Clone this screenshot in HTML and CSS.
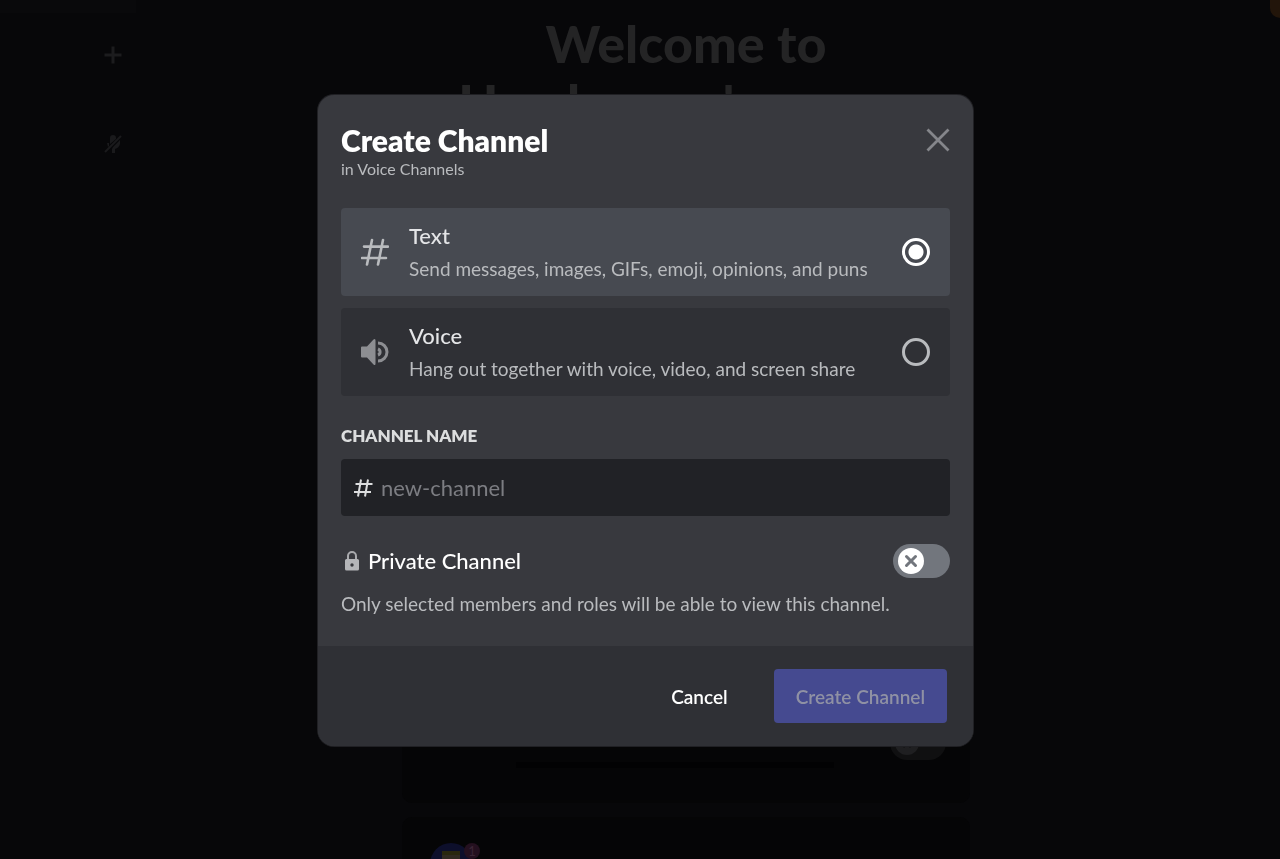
FILE: index.html
```html
<!DOCTYPE html>
<html lang="en">
<head>
<meta charset="UTF-8" />
<meta name="viewport" content="width=device-width, initial-scale=1" />
<title>Create Channel</title>
<link rel="stylesheet" href="styles.css">
</head>
<body>

<div class="app" inert>
  <aside class="sidebar">
    <div class="server-header"></div>
    <button type="button" class="side-button" aria-label="Add channel">
      <svg width="18" height="18" viewBox="0 0 18 18"><path d="M9 0.5v17M0.5 9h17" stroke="#1c1c1e" stroke-width="3" /></svg>
    </button>
    <button type="button" class="side-button" aria-label="Unmute">
      <svg width="18" height="20" viewBox="0 0 18 20">
        <path d="M6 10V4a3 3 0 0 1 6 0v1zM9 13l7-7v4a7 7 0 0 1-5 5v4H8v-4zM3 9h2v3l-1 1z" fill="#1a1a1c" />
        <path d="M1 18L17 2" stroke="#1a1a1c" stroke-width="2" />
      </svg>
    </button>
  </aside>
  <main class="content">
    <h1 class="welcome">Welcome to<br />Harshawnn's server</h1>
    <section class="card card-tall">
      <span class="bar"></span>
      <span class="card-toggle"><svg width="24" height="24" viewBox="0 0 24 24"><circle cx="12" cy="12" r="12" fill="#1f1f21" /><path d="M8 8l8 8M16 8l-8 8" stroke="#131315" stroke-width="3" /></svg></span>
    </section>
    <section class="card">
      <svg class="avatar" width="52" height="44" viewBox="0 0 52 44">
        <circle cx="21" cy="21" r="21" fill="#0d0f2b" />
        <path d="M12 8h18v36H12z" fill="#302a20" />
        <path d="M12 8h18v4H12z" fill="#29270e" />
        <circle cx="42" cy="8" r="8" fill="#24101f" />
        <text x="42" y="13" class="badge">1</text>
      </svg>
    </section>
  </main>
  <aside class="members"><span class="orb"></span></aside>
</div>

<div class="overlay">
  <form class="modal" role="dialog" aria-labelledby="title">
    <div class="modal-body">
      <header class="modal-header">
        <div>
          <h2 class="title" id="title">Create Channel</h2>
          <p class="subtitle">in Voice Channels</p>
        </div>
        <button type="button" class="close" aria-label="Close">
          <svg width="24" height="24" viewBox="0 0 24 24"><path d="M1.5 1.5l21 21M22.5 1.5l-21 21" stroke="#85868b" stroke-width="2.8" /></svg>
        </button>
      </header>

      <div class="types">
        <label class="type">
          <svg width="28" height="28" viewBox="0 0 28 28"><path d="M11 2L6 26.5M22 2L17 26.5M3 8.6h24M1 20h24" stroke="#b9bbbe" stroke-width="2.6" stroke-linecap="round" /></svg>
          <span class="type-text">
            <span class="type-name">Text</span>
            <span class="hint">Send messages, images, GIFs, emoji, opinions, and puns</span>
          </span>
          <input class="radio" type="radio" name="type" checked />
        </label>
        <label class="type">
          <svg width="28" height="28" viewBox="0 0 28 28">
            <path d="M1 8.5h5L12.5 1.6Q14.5 0 14.5 2.5V25.5Q14.5 28 12.5 26.4L6 19.5H1Q0 19.5 0 18.5V9.5Q0 8.5 1 8.5z" fill="#8d8e92" />
            <path d="M17 5a9 9 0 0 1 0 18M17 11a3.2 3.2 0 0 1 0 6" fill="none" stroke="#8d8e92" stroke-width="3" />
          </svg>
          <span class="type-text">
            <span class="type-name">Voice</span>
            <span class="hint">Hang out together with voice, video, and screen share</span>
          </span>
          <input class="radio" type="radio" name="type" />
        </label>
      </div>

      <label class="field-label" for="name">Channel name</label>
      <div class="field">
        <svg width="20" height="20" viewBox="0 0 20 20"><path d="M8 1.5L5 18.5M15 1.5L12 18.5M2.5 6h17M1 14h17" stroke="#dcddde" stroke-width="2" /></svg>
        <input class="name" id="name" type="text" placeholder="new-channel" />
      </div>

      <div class="private">
        <svg width="16" height="20" viewBox="0 0 16 20">
          <path d="M4 9V5a4 4 0 0 1 8 0V9" fill="none" stroke="#a9aaad" stroke-width="2" />
          <path d="M2.5 8h11a1.5 1.5 0 0 1 1.5 1.5v8.5a1.5 1.5 0 0 1-1.5 1.5h-11a1.5 1.5 0 0 1-1.5-1.5V9.5a1.5 1.5 0 0 1 1.5-1.5z" fill="#b4b5b8" />
          <circle cx="8" cy="14" r="1.7" fill="#36373c" />
        </svg>
        <label class="private-label" for="private">Private Channel</label>
        <span class="switch">
          <input class="switch-input" type="checkbox" role="switch" id="private" />
          <svg class="knob" width="26" height="26" viewBox="0 0 26 26"><circle cx="13" cy="13" r="13" fill="#fff" /><path d="M8.5 8.5l9 9M17.5 8.5l-9 9" stroke="#72767d" stroke-width="3" stroke-linecap="round" /></svg>
        </span>
      </div>
      <p class="hint">Only selected members and roles will be able to view this channel.</p>
    </div>

    <footer class="modal-footer">
      <button type="button" class="cancel">Cancel</button>
      <button type="submit" class="create" disabled>Create Channel</button>
    </footer>
  </form>
</div>

</body>
</html>
```

FILE: styles.css
```css
* {
  box-sizing: border-box;
}
body {
  margin: 0;
  background: #070709;
  font-family: Lato, "Noto Sans", sans-serif;
  color: #fff;
}
h1, h2, p {
  margin: 0;
}
button, input {
  font-family: inherit;
  margin: 0;
}
button {
  padding: 0;
  border: none;
  background: none;
}
svg {
  flex: none;
}

/* dimmed page */
.app {
  display: grid;
  grid-template-columns: 148px 1fr 56px;
  height: 100vh;
  overflow: hidden;
}
.sidebar {
  display: flex;
  flex-direction: column;
  align-items: flex-end;
  padding-right: 26px;
}
.server-header {
  width: 136px;
  height: 13px;
  margin-right: -14px;
  margin-bottom: 33px;
  background: #09090b;
}
.side-button {
  height: 20px;
  margin-bottom: 68px;
}
.content {
  display: flex;
  flex-direction: column;
  align-items: center;
  gap: 14px;
  padding-top: 14px;
}
.welcome {
  width: 568px;
  height: 602px;
  flex: none;
  color: #242425;
  font-size: 52px;
  line-height: 59px;
  font-weight: 900;
  text-align: center;
}
.card {
  display: flex;
  flex: none;
  justify-content: space-between;
  width: 568px;
  height: 173px;
  padding: 26px 28px;
  border-radius: 10px;
  background: #050506;
}
.card-tall {
  align-items: center;
  padding: 96px 24px 0 114px;
}
.bar {
  width: 318px;
  height: 6px;
  background: #020203;
}
.card-toggle {
  display: flex;
  width: 56px;
  height: 34px;
  margin-bottom: 44px;
  padding: 5px;
  border-radius: 17px;
  background: #101011;
}
.badge {
  fill: #3b2535;
  font-size: 13px;
  text-anchor: middle;
}
.members {
  display: flex;
  justify-content: flex-end;
}
.orb {
  width: 10px;
  height: 18px;
  border-radius: 0 0 0 10px;
  background: #22150a;
}

/* dialog */
.overlay {
  position: fixed;
  inset: 0;
  display: flex;
  align-items: center;
  justify-content: center;
  padding: 0 0 18px 11px;
}
.modal {
  width: 655px;
  max-width: 100%;
  overflow: hidden;
  border-radius: 16px;
  background: #38393e;
  box-shadow: 0 0 0 1px #202024;
}
.modal-body {
  padding: 28px 23px 28px;
}
.modal-header {
  display: flex;
  justify-content: space-between;
  align-items: flex-start;
  margin-bottom: 28px;
}
.title {
  font-size: 30px;
  line-height: 34px;
  font-weight: 800;
}
.subtitle {
  color: #b9bbbe;
  font-size: 16px;
  line-height: 23px;
}
.close {
  height: 24px;
  margin-top: 5px;
}
.types {
  display: flex;
  flex-direction: column;
  gap: 12px;
  margin-bottom: 28px;
}
.type {
  display: flex;
  align-items: center;
  gap: 20px;
  min-height: 88px;
  padding: 0 20px;
  border-radius: 4px;
  background: #2f3035;
}
.type:has(:checked) {
  background: #474a51;
}
.type-text {
  display: flex;
  flex: 1;
  flex-direction: column;
  gap: 4px;
}
.type-name {
  color: #e4e5e7;
  font-size: 22px;
  line-height: 30px;
  font-weight: 500;
}
.hint {
  color: #b9bbbe;
  font-size: 19px;
  line-height: 28px;
}
.radio {
  appearance: none;
  width: 28px;
  height: 28px;
  border: 3px solid #b9bbbe;
  border-radius: 50%;
}
.radio:checked {
  border-color: #fff;
  background: radial-gradient(circle, #fff 7px, transparent 8px);
}
.field-label {
  display: block;
  margin-bottom: 11px;
  color: #dcddde;
  font-size: 17px;
  line-height: 24px;
  font-weight: 800;
  text-transform: uppercase;
}
.field {
  display: flex;
  align-items: center;
  gap: 8px;
  height: 57px;
  margin-bottom: 28px;
  padding: 0 12px;
  border-radius: 4px;
  background: #212226;
}
.name {
  flex: 1;
  min-width: 0;
  padding: 0;
  border: none;
  outline: none;
  background: none;
  color: #dcddde;
  font-size: 22px;
}
.name::placeholder {
  color: #7c7d82;
}
.private {
  display: flex;
  align-items: center;
  gap: 8px;
  margin-bottom: 12px;
  padding-left: 3px;
}
.private-label {
  flex: 1;
  font-size: 22px;
  line-height: 34px;
  font-weight: 500;
}
.switch {
  position: relative;
  display: flex;
}
.switch-input {
  appearance: none;
  width: 57px;
  height: 34px;
  border-radius: 17px;
  background: #72767d;
}
.knob {
  position: absolute;
  top: 4px;
  left: 5px;
  pointer-events: none;
}
.modal-footer {
  display: flex;
  justify-content: flex-end;
  align-items: center;
  gap: 24px;
  padding: 23px 26px;
  background: #2f3035;
}
.cancel, .create {
  height: 54px;
  padding: 0 22px;
  border-radius: 4px;
  color: #fff;
  font-size: 19px;
  font-weight: 600;
}
.create {
  background: #454a90;
  color: #8f91a4;
}
```
